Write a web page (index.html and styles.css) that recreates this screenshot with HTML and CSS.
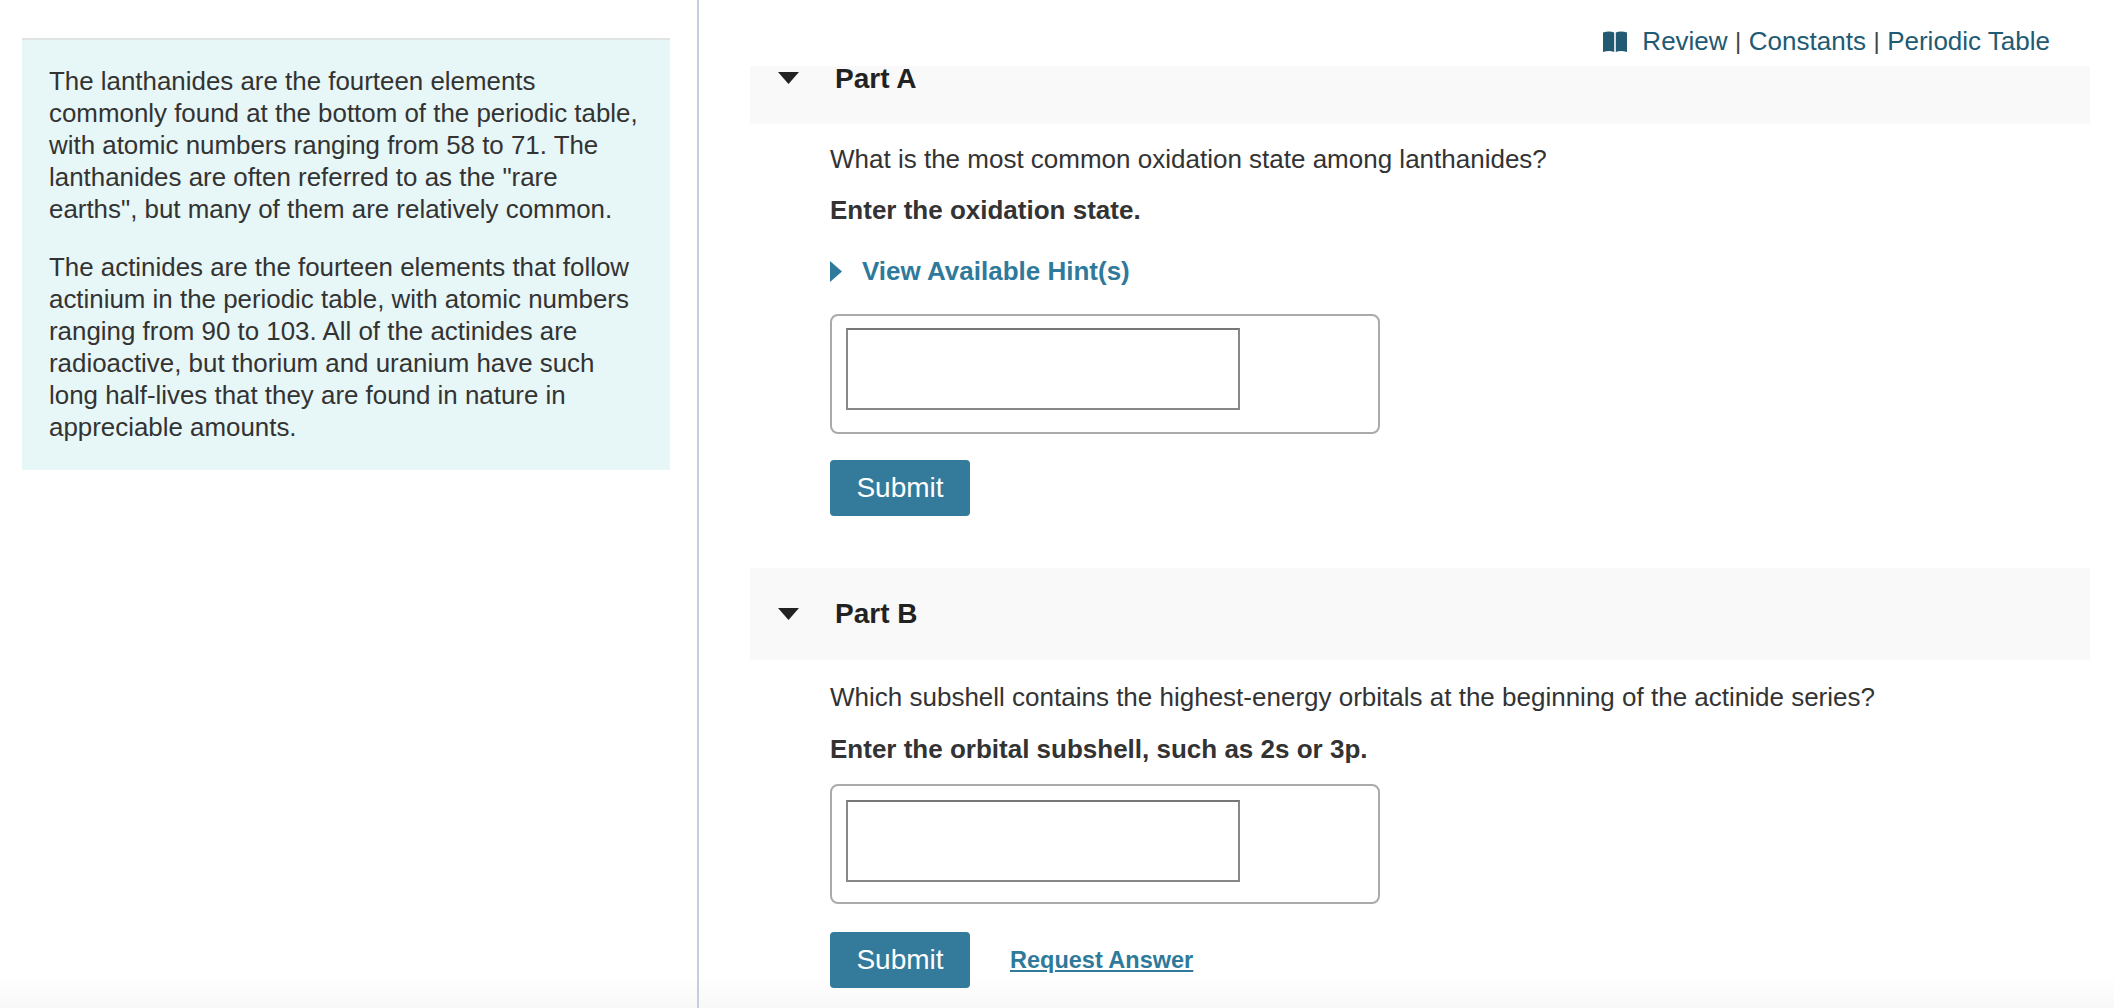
FILE: index.html
```html
<!DOCTYPE html>
<html lang="en">
<head>
    <meta charset="UTF-8">
    <meta name="viewport" content="width=device-width, initial-scale=1.0">
    <title>Lanthanides and Actinides</title>
    <link rel="stylesheet" href="styles.css">
</head>
<body>

    <div class="page">
        <!-- Intro text -->
        <div class="side">
            <div class="intro">
                <p>The lanthanides are the fourteen elements commonly found at the bottom of the periodic table, with atomic numbers ranging from 58 to 71. The lanthanides are often referred to as the "rare earths", but many of them are relatively common.</p>
                <p>The actinides are the fourteen elements that follow actinium in the periodic table, with atomic numbers ranging from 90 to 103. All of the actinides are radioactive, but thorium and uranium have such long half-lives that they are found in nature in appreciable amounts.</p>
            </div>
        </div>

        <div class="main">
            <div class="toolbar">
                <svg class="book-icon" viewBox="0 0 24 22" aria-hidden="true">
                    <path d="M0 1.5C4 .2 8 .2 11.2 1.5V21C8 19.8 4 19.8 0 21Z"/>
                    <path d="M24 1.5C20 .2 16 .2 12.8 1.5V21C16 19.8 20 19.8 24 21Z"/>
                </svg>
                <a href="#">Review</a><span class="sep">|</span><a href="#">Constants</a><span class="sep">|</span><a href="#">Periodic Table</a>
            </div>

            <!-- Part A -->
            <div class="part-head part-head-a">
                <svg class="caret" viewBox="0 0 21 12" aria-hidden="true"><path d="M0 0H21L10.5 12Z"/></svg>
                <h3>Part A</h3>
            </div>
            <div class="part-body">
                <p class="question">What is the most common oxidation state among lanthanides?</p>
                <p class="instruction">Enter the oxidation state.</p>
                <a class="hint" href="#">
                    <svg class="hint-arrow" viewBox="0 0 12 21" aria-hidden="true"><path d="M0 0L12 10.5L0 21Z"/></svg>
                    View Available Hint(s)
                </a>
                <div class="answer-box"><input type="text" class="answer-input"></div>
                <div class="actions"><button type="button">Submit</button></div>
            </div>

            <!-- Part B -->
            <div class="part-head part-head-b">
                <svg class="caret" viewBox="0 0 21 12" aria-hidden="true"><path d="M0 0H21L10.5 12Z"/></svg>
                <h3>Part B</h3>
            </div>
            <div class="part-body part-body-b">
                <p class="question">Which subshell contains the highest-energy orbitals at the beginning of the actinide series?</p>
                <p class="instruction">Enter the orbital subshell, such as 2s or 3p.</p>
                <div class="answer-box"><input type="text" class="answer-input"></div>
                <div class="actions">
                    <button type="button">Submit</button>
                    <a class="request" href="#">Request Answer</a>
                </div>
            </div>
        </div>
    </div>

</body>
</html>
```

FILE: styles.css
```css
* {
    box-sizing: border-box;
}
html, body {
    margin: 0;
    height: 100%;
}
body {
    font-family: "Liberation Sans", Arial, sans-serif;
    font-size: 26px;
    line-height: 32px;
    color: #333;
    overflow: hidden;
    background: linear-gradient(to bottom, #fff 975px, #f8f8f8 1008px);
}
p {
    margin: 0;
}
.page {
    display: flex;
    height: 1008px;
}
.side {
    width: 699px;
    flex-shrink: 0;
    padding: 38px 0 0 22px;
    border-right: 2px solid #c3cfe0;
}
.intro {
    width: 648px;
    height: 432px;
    padding: 25px 27px 0;
    font-size: 25.9px;
    background-color: #e7f6f6;
    border-top: 2px solid #dfe3e3;
}
.intro p + p {
    margin-top: 26px;
}
.main {
    flex: 1;
    padding: 0 24px 0 51px;
}
.toolbar {
    height: 66px;
    padding: 25px 40px 0 0;
    display: flex;
    justify-content: flex-end;
    align-items: flex-start;
    color: #444;
}
.toolbar a {
    color: #215a72;
    text-decoration: none;
}
.sep {
    margin: 0 7.5px;
    font-size: 24px;
}
.book-icon {
    width: 24px;
    height: 22px;
    margin: 6px 15px 0 0;
    fill: #215a72;
}
.part-head {
    display: flex;
    align-items: flex-start;
    background-color: #f9f9f9;
}
.part-head-a {
    height: 58px;
}
.part-head-b {
    height: 92px;
    margin-top: 52px;
    padding-top: 32px;
}
.part-head h3 {
    margin: 0 0 0 36px;
    font-size: 28px;
    line-height: 28px;
    color: #222;
}
.part-head-a h3 {
    line-height: 26px;
}
.caret {
    width: 21px;
    height: 12px;
    margin: 6px 0 0 28px;
    fill: #222;
}
.part-head-b .caret {
    margin-top: 8px;
}
.part-body {
    padding: 19px 0 0 80px;
}
.part-body-b {
    padding-top: 21px;
}
.instruction {
    margin-top: 19px;
    font-weight: bold;
}
.part-body-b .instruction {
    margin-top: 20px;
}
.hint {
    display: flex;
    align-items: center;
    margin-top: 29px;
    font-weight: bold;
    color: #2f7a9b;
    text-decoration: none;
}
.hint-arrow {
    width: 12px;
    height: 21px;
    margin-right: 20px;
    fill: #2f7a9b;
}
.answer-box {
    width: 550px;
    height: 120px;
    margin-top: 27px;
    padding: 12px 14px;
    border: 2px solid #aaa;
    border-radius: 8px;
    background-color: #fff;
}
.part-body-b .answer-box {
    margin-top: 19px;
    padding-top: 14px;
}
.answer-input {
    display: block;
    width: 394px;
    height: 82px;
    padding: 0;
    border: 2px solid #888;
    border-top-color: #777;
    background-color: #fff;
}
.actions {
    display: flex;
    align-items: center;
    margin-top: 26px;
}
.part-body-b .actions {
    margin-top: 28px;
}
button {
    width: 140px;
    height: 56px;
    padding: 0;
    font-family: inherit;
    font-size: 28px;
    color: white;
    background-color: #347a9b;
    border: none;
    border-radius: 4px;
}
.request {
    margin-left: 40px;
    font-size: 23.5px;
    font-weight: bold;
    color: #2f7a9b;
}
```
